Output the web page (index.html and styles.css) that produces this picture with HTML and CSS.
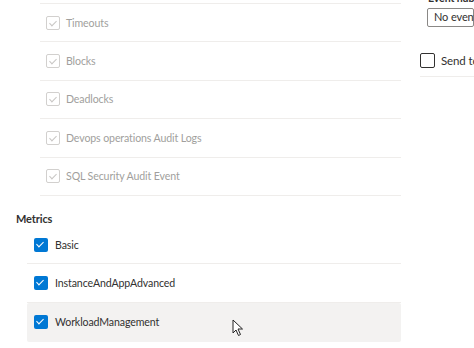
FILE: index.html
```html
<!DOCTYPE html>
<html lang="en">

<head>
    <meta charset="UTF-8">
    <meta name="viewport" content="width=device-width, initial-scale=1.0">
    <title>Diagnostic setting</title>
    <link rel="stylesheet" href="styles.css">
</head>

<body>
    <div class="page">
        <div class="left">
            <div class="log-list">
                <div class="row disabled"><span class="box"></span>Timeouts</div>
                <div class="row disabled"><span class="box"></span>Blocks</div>
                <div class="row disabled"><span class="box"></span>Deadlocks</div>
                <div class="row disabled"><span class="box"></span>Devops operations Audit Logs</div>
                <div class="row disabled"><span class="box"></span>SQL Security Audit Event</div>
            </div>

            <h3 class="section-title">Metrics</h3>
            <div class="metric-list">
                <div class="row checked"><span class="box"></span>Basic</div>
                <div class="row checked"><span class="box"></span>InstanceAndAppAdvanced</div>
                <div class="row checked hover"><span class="box"></span>WorkloadManagement
                    <svg class="cursor" width="12" height="18" viewBox="0 0 12 18">
                        <path d="M1 1 L1 14 L4 11 L6.5 16.5 L8.5 15.5 L6 10 L10.5 10 Z" fill="#fff" stroke="#222" stroke-width="1" stroke-linejoin="round" />
                    </svg>
                </div>
            </div>
        </div>

        <div class="right">
            <div class="field-label">Event hub name</div>
            <div class="dropdown">No event hub selected</div>
            <div class="option"><span class="empty-box"></span>Send to partner solution</div>
        </div>
    </div>
</body>

</html>
```

FILE: styles.css
```css
body {
    margin: 0;
    font-family: 'Segoe UI', 'Lato', sans-serif;
    font-size: 10.6px;
    letter-spacing: -0.12px;
    color: #323130;
    background-color: #ffffff;
    overflow: hidden;
}

.page {
    display: flex;
    height: 348px;
}

.left {
    width: 401px;
    flex-shrink: 0;
}

.log-list {
    margin: 3px 0 0 40px;
    border-top: 1px solid #efedeb;
}

.row {
    position: relative;
    display: flex;
    align-items: center;
    gap: 6px;
    height: 38.4px;
    box-sizing: border-box;
    padding-left: 6px;
    border-bottom: 1px solid #efedeb;
}

.row .box {
    width: 14px;
    height: 14px;
    box-sizing: border-box;
    border-radius: 2px;
    flex-shrink: 0;
    position: relative;
}

.row .box::after {
    content: '';
    position: absolute;
    left: 4px;
    top: 2px;
    width: 3px;
    height: 6px;
    border-right: 1px solid;
    border-bottom: 1px solid;
    transform: rotate(45deg);
}

.row.disabled {
    color: #a19f9d;
}

.row.disabled .box {
    border: 1px solid #d2d0ce;
    background-color: #ffffff;
}

.row.disabled .box::after {
    border-color: #c8c6c4;
}

.section-title {
    margin: 0;
    padding: 15px 0 0 16px;
    height: 30px;
    box-sizing: border-box;
    line-height: 16px;
    font-size: 11px;
    font-weight: 700;
    color: #323130;
}

.metric-list {
    padding-left: 27px;
}

.row.checked {
    gap: 7px;
    padding-left: 7px;
}

.row.checked .box {
    background-color: #0078d4;
}

.row.checked .box::after {
    border-color: #ffffff;
}

.row.hover {
    height: 39px;
    background-color: #f3f2f1;
    border-bottom: none;
    border-radius: 2px;
}

.cursor {
    position: absolute;
    left: 205px;
    top: 16px;
}

.right {
    flex: 1;
    margin-left: 19px;
    overflow: hidden;
    white-space: nowrap;
}

.field-label {
    margin-top: -9px;
    line-height: 14px;
    padding-left: 8px;
    font-weight: 700;
}

.dropdown {
    margin: 3px 0 0 7px;
    height: 19px;
    box-sizing: border-box;
    border: 1px solid #8a8886;
    border-radius: 2px;
    padding-left: 6px;
    line-height: 16px;
    font-size: 11px;
}

.option {
    display: flex;
    align-items: center;
    gap: 6px;
    margin-top: 26px;
    padding-bottom: 8px;
    border-bottom: 1px solid #efedeb;
    font-size: 11.5px;
}

.empty-box {
    width: 15px;
    height: 15px;
    box-sizing: border-box;
    border: 1px solid #323130;
    border-radius: 2px;
    flex-shrink: 0;
}
```
